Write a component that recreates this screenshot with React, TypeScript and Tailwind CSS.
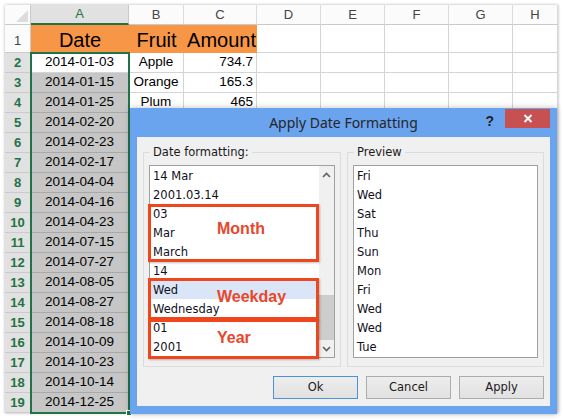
import React from "react";

const dates = [
  "2014-01-03", "2014-01-15", "2014-01-25", "2014-02-20", "2014-02-23", "2014-02-17",
  "2014-04-04", "2014-04-16", "2014-04-23", "2014-07-15", "2014-07-27", "2014-08-05",
  "2014-08-27", "2014-08-18", "2014-10-09", "2014-10-23", "2014-10-14", "2014-12-25",
];
const fruits = ["Apple", "Orange", "Plum"];
const amounts = ["734.7", "165.3", "465"];
const otherCols = ["D", "E", "F", "G", "H"];

const formats = ["14 Mar", "2001.03.14", "03", "Mar", "March", "14", "Wed", "Wednesday", "01", "2001"];
const preview = ["Fri", "Wed", "Sat", "Thu", "Sun", "Mon", "Fri", "Wed", "Wed", "Tue"];

function Sheet() {
  const rows = dates.map((d, i) => {
    const r = i + 2;
    return (
      <React.Fragment key={r}>
        <div className="flex items-center justify-center bg-[#e1e1e1] border-r border-b border-[#cbcbcb] text-[13px] font-bold text-[#217346]">
          {r}
        </div>
        <div
          className={
            "flex items-center justify-center text-[13.5px] text-black border-r border-b " +
            (i === 0 ? "bg-white border-[#d4d4d4]" : "bg-[#c6c6c6] border-[#a9a9a9]")
          }
        >
          {d}
        </div>
        <div className="flex items-center justify-center text-[13.5px] text-black border-r border-b border-[#d4d4d4] bg-white">
          {fruits[i] ?? ""}
        </div>
        <div className="flex items-center justify-end pr-[3px] text-[13.5px] text-black border-r border-b border-[#d4d4d4] bg-white">
          {amounts[i] ?? ""}
        </div>
        {otherCols.map((c) => (
          <div key={c} className="border-r border-b border-[#d4d4d4] bg-white" />
        ))}
      </React.Fragment>
    );
  });

  return (
    <div className="relative w-[553px] grid grid-cols-[26px_98px_55px_73px_64px_64px_64px_64px_45px] grid-rows-[20px_28px_repeat(18,20px)] font-['Liberation_Sans',sans-serif] shadow-[0_0_3px_rgba(0,0,0,0.3)]">
      <div className="flex items-end justify-end bg-[#fbfbfb] border-r border-b border-[#c9c9c9] p-[2px]">
        <svg width="12" height="12" viewBox="0 0 12 12">
          <polygon points="12,0 12,12 0,12" fill="#dcdcdc" />
        </svg>
      </div>
      <div className="flex items-center justify-center bg-[#e1e1e1] border-r border-[#c9c9c9] border-b-2 border-b-[#217346] text-[13px] text-[#217346]">
        A
      </div>
      {["B", "C", ...otherCols].map((c) => (
        <div
          key={c}
          className="flex items-center justify-center bg-[#fbfbfb] border-r border-[#dadada] border-b border-b-[#c9c9c9] text-[13px] text-[#444]"
        >
          {c}
        </div>
      ))}
      <div className="flex items-end justify-center pb-[2px] bg-[#fbfbfb] border-r border-b border-[#cbcbcb] text-[13px] text-[#444]">
        1
      </div>
      <div className="flex items-center justify-center bg-[#f79646] text-[20px] text-black pt-[2px]">Date</div>
      <div className="flex items-center justify-center bg-[#f79646] text-[20px] text-black pt-[2px]">Fruit</div>
      <div className="flex items-center justify-end pr-px bg-[#f79646] text-[20px] text-black pt-[2px]">Amount</div>
      {otherCols.map((c) => (
        <div key={c} className="border-r border-b border-[#d4d4d4] bg-white" />
      ))}
      {rows}
      <div className="absolute left-[25px] top-[47px] w-[100px] h-[362px] border-2 border-[#217346] pointer-events-none">
        <div className="absolute -right-[4px] -bottom-[4px] w-[6px] h-[6px] bg-[#217346] border border-white" />
      </div>
    </div>
  );
}

function Chevron({ up }: { up?: boolean }) {
  return (
    <svg width="9" height="6" viewBox="0 0 9 6">
      <polyline
        points={up ? "1,5 4.5,1.5 8,5" : "1,1 4.5,4.5 8,1"}
        fill="none"
        stroke="#606060"
        strokeWidth="1.6"
      />
    </svg>
  );
}

function Group({ label, children }: { label: string; children: React.ReactNode }) {
  return (
    <div className="relative border border-[#dcdcdc] h-[215px] pt-[12px] px-[5px]">
      <div className="absolute left-[6px] -top-[8px] px-[3px] bg-[#f0f0f0] text-[11.5px] leading-[14px] text-[#1a1a1a]">
        {label}
      </div>
      {children}
    </div>
  );
}

function RedBox({ top, h, label, pb }: { top: string; h: string; label: string; pb: string }) {
  return (
    <div
      className={
        "absolute -left-[2px] w-[171px] border-[3px] border-[#f0461e] flex items-center pl-[66px] shadow-[1px_1px_2px_rgba(0,0,0,0.25)] " +
        top + " " + h + " " + pb
      }
    >
      <span className="font-['Liberation_Sans',sans-serif] font-bold text-[16px] leading-[18px] text-[#e8472b]">
        {label}
      </span>
    </div>
  );
}

function Button({ children, primary }: { children: React.ReactNode; primary?: boolean }) {
  return (
    <div
      className={
        "w-[85px] h-[23px] flex items-center justify-center border bg-linear-to-b from-[#ededed] to-[#e1e1e1] text-[11.5px] text-[#1a1a1a] " +
        (primary ? "border-[#4a93d9]" : "border-[#acacac]")
      }
    >
      {children}
    </div>
  );
}

function Dialog() {
  return (
    <div className="absolute left-[130px] top-[108px] w-[427px] h-[306px] bg-[#6aa3ee] flex flex-col shadow-[0_0_6px_rgba(0,0,0,0.25)] font-['DejaVu_Sans',sans-serif]">
      <div className="h-[29px] grid grid-cols-[1fr_auto_1fr]">
        <div />
        <div className="flex items-center pb-[1px] font-['Noto_Sans',sans-serif] text-[14px] text-[#262626]">
          Apply Date Formatting
        </div>
        <div className="flex items-start justify-end pr-[7px]">
          <span className="mt-[3px] mr-[11px] font-['Liberation_Sans',sans-serif] font-bold text-[14px] text-[#222]">?</span>
          <div className="mt-[1px] w-[45px] h-[19px] bg-[#c75050] flex items-center justify-center">
            <svg width="10" height="9" viewBox="0 0 10 9">
              <path d="M1.5 1 L8.5 8 M8.5 1 L1.5 8" stroke="white" strokeWidth="2" />
            </svg>
          </div>
        </div>
      </div>
      <div className="flex-1 mx-[7px] mb-[8px] bg-[#f0f0f0] flex flex-col px-[6px] pt-[15px]">
        <div className="flex gap-[6px]">
          <div className="w-[198px]">
            <Group label="Date formatting:">
              <div className="relative h-[193px] bg-white border border-[#a0a0a0] flex">
                <div className="flex-1 flex flex-col">
                  {formats.map((f, i) => (
                    <div
                      key={i}
                      className={
                        "h-[19px] leading-[21px] pl-[3px] text-[11.5px] text-[#101020] " +
                        (i === 6 ? "bg-[#dae6f8]" : "")
                      }
                    >
                      {f}
                    </div>
                  ))}
                </div>
                <div className="w-[15px] bg-[#f0f0f0] flex flex-col">
                  <div className="h-[17px] flex items-center justify-center">
                    <Chevron up />
                  </div>
                  <div className="flex-1 flex flex-col justify-end">
                    <div className="h-[45px] bg-[#cdcdcd]" />
                  </div>
                  <div className="h-[17px] flex items-center justify-center">
                    <Chevron />
                  </div>
                </div>
                <RedBox top="top-[38px]" h="h-[58px]" label="Month" pb="pb-[8px]" />
                <RedBox top="top-[112px]" h="h-[42px]" label="Weekday" pb="pb-[4px]" />
                <RedBox top="top-[153px]" h="h-[40px]" label="Year" pb="pb-[2px]" />
              </div>
            </Group>
          </div>
          <div className="w-[197px]">
            <Group label="Preview">
              <div className="h-[193px] bg-white border border-[#a0a0a0] flex flex-col">
                {preview.map((p, i) => (
                  <div key={i} className="h-[19px] leading-[21px] pl-[3px] text-[11.5px] text-[#101020]">
                    {p}
                  </div>
                ))}
              </div>
            </Group>
          </div>
        </div>
        <div className="flex justify-end gap-[8px] mt-[9px]">
          <Button primary>Ok</Button>
          <Button>Cancel</Button>
          <Button>Apply</Button>
        </div>
      </div>
    </div>
  );
}

export default function App() {
  return (
    <div className="relative w-[563px] h-[420px] bg-white overflow-hidden pt-[5px] pl-[5px]">
      <Sheet />
      <Dialog />
    </div>
  );
}
